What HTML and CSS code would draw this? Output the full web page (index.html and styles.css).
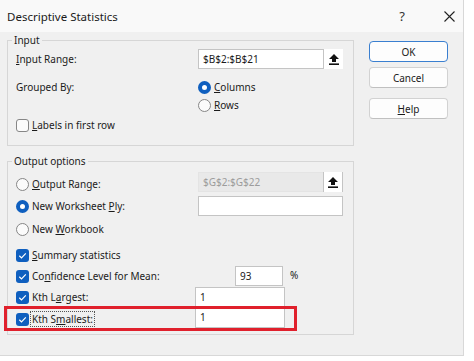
FILE: index.html
```html
<!DOCTYPE html>
<html lang="en">
<head>
    <meta charset="UTF-8">
    <title>Descriptive Statistics</title>
    <link rel="stylesheet" href="styles.css">
</head>
<body>
    <div class="dialog">
        <div class="titlebar">
            <span class="title">Descriptive Statistics</span>
            <span class="help-glyph">?</span>
            <span class="close-glyph">
                <svg width="11" height="11" viewBox="0 0 11 11"><path d="M0.5 0.5 L10.5 10.5 M10.5 0.5 L0.5 10.5" stroke="#222" stroke-width="1.1" fill="none"/></svg>
            </span>
        </div>

        <div class="content">
            <div class="groups">
                <fieldset class="group group-input">
                    <legend>Input</legend>
                    <div class="row">
                        <span class="field-label"><u>I</u>nput Range:</span>
                        <div class="text-box range-box">
                            <span>$B$2:$B$21</span>
                            <span class="pick-btn">
                                <svg width="10" height="11" viewBox="0 0 10 11"><polygon points="5,0 10,5 7,5 7,8 3,8 3,5 0,5" fill="#111"/><rect x="0" y="9.4" width="10" height="1.6" fill="#111"/></svg>
                            </span>
                        </div>
                    </div>
                    <div class="row row-grouped">
                        <span class="field-label grouped-label">Grouped By:</span>
                        <div class="radio-list">
                            <label class="option"><span class="radio checked"></span><span><u>C</u>olumns</span></label>
                            <label class="option"><span class="radio"></span><span><u>R</u>ows</span></label>
                        </div>
                    </div>
                    <div class="row row-labels">
                        <label class="option"><span class="checkbox"></span><span><u>L</u>abels in first row</span></label>
                    </div>
                </fieldset>

                <fieldset class="group group-output">
                    <legend>Output options</legend>
                    <div class="row">
                        <label class="option field-label low"><span class="radio"></span><span><u>O</u>utput Range:</span></label>
                        <div class="text-box range-box disabled">
                            <span>$G$2:$G$22</span>
                            <span class="pick-btn">
                                <svg width="10" height="11" viewBox="0 0 10 11"><polygon points="5,0 10,5 7,5 7,8 3,8 3,5 0,5" fill="#111"/><rect x="0" y="9.4" width="10" height="1.6" fill="#111"/></svg>
                            </span>
                        </div>
                    </div>
                    <div class="row row-ply">
                        <label class="option field-label"><span class="radio checked"></span><span>New Worksheet <u>P</u>ly:</span></label>
                        <div class="text-box range-box"></div>
                    </div>
                    <div class="row row-workbook">
                        <label class="option"><span class="radio"></span><span>New <u>W</u>orkbook</span></label>
                    </div>
                    <div class="row row-summary">
                        <label class="option"><span class="checkbox checked"></span><span><u>S</u>ummary statistics</span></label>
                    </div>
                    <div class="row row-confidence">
                        <label class="option conf-label"><span class="checkbox checked"></span><span>Co<u>n</u>fidence Level for Mean:</span></label>
                        <div class="text-box conf-box">93</div>
                        <span class="percent">%</span>
                    </div>
                    <div class="row row-kth">
                        <label class="option kth-label"><span class="checkbox checked"></span><span>Kth L<u>a</u>rgest:</span></label>
                        <div class="text-box kth-box">1</div>
                    </div>
                    <div class="row row-kth row-smallest">
                        <label class="option kth-label low"><span class="checkbox checked"></span><span class="focus">Kth S<u>m</u>allest:</span></label>
                        <div class="text-box kth-box tall">1</div>
                        <div class="highlight"></div>
                    </div>
                </fieldset>
            </div>

            <div class="buttons">
                <button class="btn btn-default">OK</button>
                <button class="btn btn-cancel">Cancel</button>
                <button class="btn btn-help"><u>H</u>elp</button>
            </div>
        </div>
    </div>
</body>
</html>
```

FILE: styles.css
```css
body {
    margin: 0;
    padding: 0;
    background-color: #ffffff;
    font-family: "Noto Sans", "Open Sans", sans-serif;
    font-size: 10px;
    color: #1b1b1b;
}
.dialog {
    width: 464px;
    height: 356px;
    background-color: #f0f0f0;
    border-right: 1px solid #d8d8d8;
    border-bottom: 1px solid #d8d8d8;
    box-sizing: border-box;
}
.titlebar {
    height: 32px;
    display: flex;
    align-items: center;
    padding-left: 7px;
    background-color: #f9f9f9;
}
.title {
    font-size: 11.5px;
    color: #1a1a1a;
}
.help-glyph {
    margin-left: auto;
    font-size: 13px;
    color: #333;
}
.close-glyph {
    display: flex;
    margin-left: 39px;
    margin-right: 8px;
}
.content {
    display: flex;
    padding-left: 7px;
}
.groups {
    width: 347px;
    padding-top: 1px;
}
.group {
    margin: 0;
    border: 1px solid #d6d6d6;
    padding: 2px 0 11px 8px;
}
.group legend {
    padding: 0 2px;
    margin-left: -4px;
    line-height: 14px;
}
.group-output {
    margin-top: 8px;
    padding-top: 4px;
    padding-bottom: 6px;
}
.row {
    display: flex;
    align-items: center;
    height: 20px;
}
.field-label {
    width: 182px;
    flex-shrink: 0;
}
.low {
    padding-top: 4px;
}
.row-grouped {
    margin-top: 9px;
    height: auto;
    align-items: flex-start;
}
.grouped-label {
    line-height: 18px;
}
.radio-list {
    display: flex;
    flex-direction: column;
}
.radio-list .option {
    height: 18px;
}
.row-labels {
    margin-top: 2px;
    height: 18px;
}
.option {
    display: flex;
    align-items: center;
    gap: 3px;
}
.radio {
    width: 13px;
    height: 13px;
    border-radius: 50%;
    border: 1px solid #868686;
    background-color: #fbfbfb;
    box-sizing: border-box;
}
.radio.checked {
    border: 4px solid #0f5fbf;
    background-color: #fff;
}
.checkbox {
    width: 13px;
    height: 13px;
    border-radius: 3px;
    border: 1px solid #868686;
    background-color: #fbfbfb;
    box-sizing: border-box;
}
.checkbox.checked {
    border: none;
    background-color: #0f5fbf;
    background-image: url("data:image/svg+xml;utf8,<svg xmlns='http://www.w3.org/2000/svg' width='13' height='13' viewBox='0 0 13 13'><path d='M3.3 6.8 L5.5 8.9 L9.8 4.4' stroke='white' stroke-width='1.2' fill='none'/></svg>");
}
.text-box {
    display: flex;
    align-items: center;
    height: 20px;
    background-color: #fff;
    border: 1px solid #c4c4c4;
    padding-left: 4px;
    box-sizing: border-box;
}
.range-box {
    width: 145px;
}
.range-box.disabled {
    background-color: #e9e9e9;
    border-color: #e4e4e4;
    color: #9c9c9c;
}
.pick-btn {
    margin-left: auto;
    width: 20px;
    height: 20px;
    margin-right: -1px;
    display: flex;
    align-items: center;
    justify-content: center;
    background-color: #fff;
    border: 1px solid #c4c4c4;
    border-top: none;
    border-bottom: none;
    box-sizing: border-box;
}
.range-box:not(.disabled) .pick-btn {
    border-right: none;
}
.row-ply {
    margin-top: 4px;
}
.row-workbook {
    margin-top: 3px;
}
.row-summary {
    margin-top: 6px;
}
.row-confidence {
    margin-top: 1px;
}
.conf-label {
    width: 219px;
    flex-shrink: 0;
}
.conf-box {
    width: 48px;
}
.percent {
    margin-left: 7px;
    margin-top: -2px;
}
.row-kth {
    margin-top: 1px;
}
.kth-label {
    width: 179px;
    flex-shrink: 0;
}
.kth-box {
    width: 90px;
}
.row-smallest {
    position: relative;
    margin-top: -1px;
    height: 22px;
}
.kth-box.tall {
    height: 22px;
}
.focus {
    border: 1px dotted #555;
    padding: 0 1px;
    margin-left: -2px;
}
.highlight {
    position: absolute;
    left: -12px;
    top: 0;
    width: 293px;
    height: 25px;
    border: 3px solid #e0202c;
    box-sizing: border-box;
}
.buttons {
    display: flex;
    flex-direction: column;
    margin-left: 15px;
    margin-top: 9px;
    width: 79px;
}
.btn {
    font-family: "Noto Sans", "Open Sans", sans-serif;
    font-size: 10px;
    color: #1b1b1b;
    background-color: #fdfdfd;
    border: 1px solid #d2d2d2;
    border-bottom-color: #c0c0c0;
    border-radius: 4px;
    height: 21px;
    padding: 0;
}
.btn-default {
    border: 1px solid #3a7fd0;
}
.btn-cancel {
    margin-top: 5px;
}
.btn-help {
    margin-top: 10px;
}
```
